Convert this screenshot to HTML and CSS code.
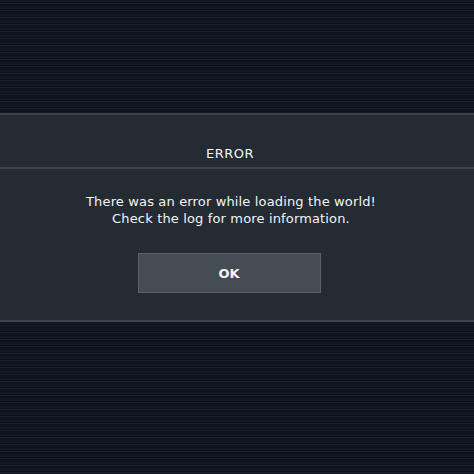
FILE: index.html
```html
<!DOCTYPE html>
<html>
<head>
<meta charset="utf-8">
<link rel="stylesheet" href="styles.css">
</head>
<body>
<div class="screen">
  <div class="dialog">
    <div class="title">ERROR</div>
    <div class="body">
      <p class="msg">There was an error while loading the world!<br>Check the log for more information.</p>
      <button class="ok">OK</button>
    </div>
  </div>
</div>
</body>
</html>
```
FILE: styles.css
```css
html, body {
  margin: 0;
  padding: 0;
}
.screen {
  width: 474px;
  height: 474px;
  display: flex;
  flex-direction: column;
  justify-content: flex-start;
  background-color: #0f141c;
  background-image: repeating-linear-gradient(to bottom,
    #131922 0px, #131922 2px,
    #0b0f16 2px, #0b0f16 3px,
    #1a212b 3px, #1a212b 4px,
    #0f141c 4px, #0f141c 7px);
  font-family: "DejaVu Sans", "Liberation Sans", sans-serif;
  color: #f2f4f6;
}
.dialog {
  margin-top: 113px;
  height: 205px;
  background: #252b33;
  border-top: 2px solid #3a404b;
  border-bottom: 2px solid #3b4250;
  display: flex;
  flex-direction: column;
}
.title {
  height: 54px;
  box-sizing: border-box;
  padding-top: 32px;
  padding-right: 14px;
  text-align: center;
  font-size: 13px;
  letter-spacing: 0.5px;
  line-height: 14px;
  border-bottom: 2px solid #3d434b;
}
.body {
  display: flex;
  flex-direction: column;
  align-items: center;
  padding-right: 12px;
}
.msg {
  margin: 24px 0 0 0;
  text-align: center;
  font-size: 13px;
  letter-spacing: 0.15px;
  line-height: 17px;
}
.ok {
  margin-top: 26px;
  margin-right: 4px;
  width: 183px;
  height: 40px;
  background: #454c54;
  border: 1px solid #5b6169;
  color: #f0f2f4;
  font-family: "DejaVu Sans", "Liberation Sans", sans-serif;
  font-size: 13px;
  font-weight: bold;
  padding: 0;
}
```
